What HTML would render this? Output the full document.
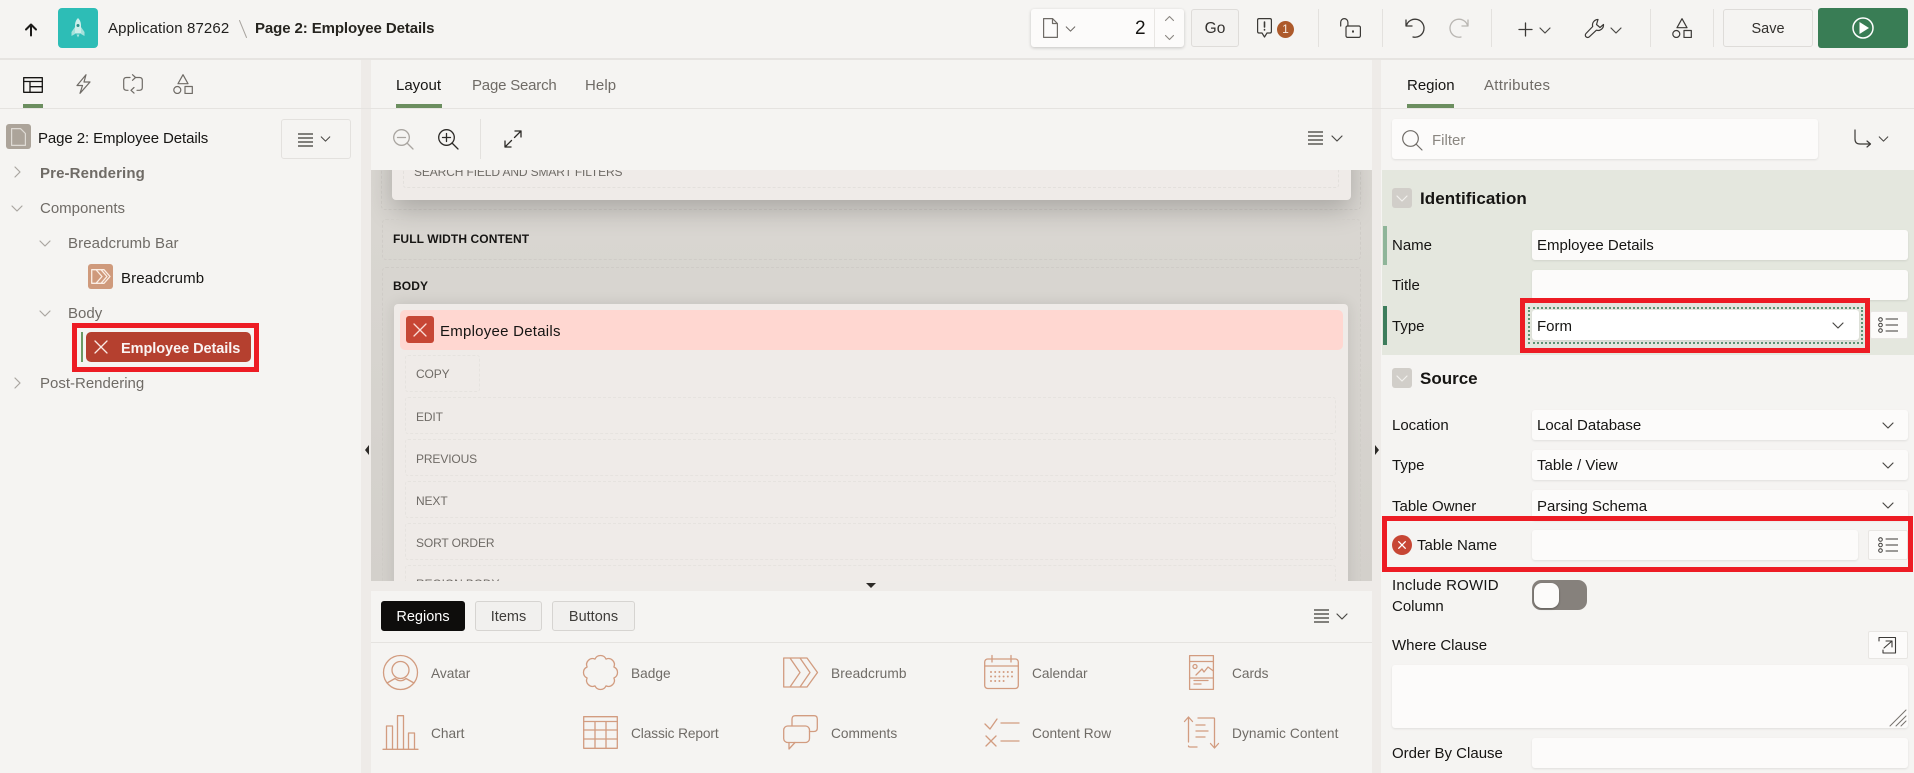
<!DOCTYPE html>
<html><head><meta charset="utf-8"><style>
html,body{margin:0;padding:0;width:1914px;height:773px;overflow:hidden;background:#f5f4f2}
body{position:relative;font-family:"Liberation Sans",sans-serif;font-size:15px;color:#161513}
.a{position:absolute;box-sizing:border-box}
.t{position:absolute;white-space:nowrap;line-height:20px;margin-top:1px}
svg{position:absolute;overflow:visible;fill:none;stroke-linecap:round;stroke-linejoin:round}
.g{color:#6f6b66}
.inp{position:absolute;box-sizing:border-box;background:#fcfbfa;border-radius:3px;height:30px;box-shadow:0 1px 2px rgba(0,0,0,.09)}
.side{position:absolute;box-sizing:border-box;background:#fcfbfa;border:1px solid #e8e6e3;border-radius:2px;width:40px}
.sep{position:absolute;width:1px;background:#e3e1de}
.red{position:absolute;box-sizing:border-box;border:5px solid #ed1c24;z-index:20}
.box{position:absolute;box-sizing:border-box;border:1px dashed #e6e3df;border-radius:3px;left:405px;width:931px;height:37px}
.cap{position:absolute;font-size:12px;line-height:14px;color:#6f6b66;white-space:nowrap;letter-spacing:-.12px}
.cb{font-weight:bold;color:#161513;letter-spacing:.1px}
.btn{position:absolute;box-sizing:border-box;border:1px solid #d6d4d1;border-radius:3px;background:#f1f0ee;text-align:center;top:601px;height:30px;line-height:30px;font-size:14.5px;color:#3f3d3a}
.lbl{position:absolute;font-size:13.7px;line-height:20px;color:#6f6b66;white-space:nowrap;margin-top:1px}
.ic{stroke:#d29c80;stroke-width:1.3}
.chev{stroke:#4a4845;stroke-width:1.2}
.gch{stroke:#a9a5a0;stroke-width:1.2}
</style></head><body>
<svg width="0" height="0" style="position:absolute">
<defs>
<symbol id="shapes" viewBox="0 0 20 20"><path d="M10 .7L15 9.7H5Z"/><circle cx="4.300" cy="16" r="3.500"/><rect x="12" y="12.500" width="7.300" height="7"/></symbol>
<symbol id="ham" viewBox="0 0 15 14"><path d="M0 1H15M0 5H15M0 9H15M0 13H15"/></symbol>
<symbol id="lst" viewBox="0 0 20 16"><circle cx="2.500" cy="2.500" r="1.800"/><circle cx="2.500" cy="8" r="1.800"/><circle cx="2.500" cy="13.500" r="1.800"/><path d="M8 2H20M8 8H20M8 14H20"/></symbol>
<symbol id="dn" viewBox="0 0 12 7"><path d="M1 1L6 6L11 1"/></symbol>
</defs></svg>

<!-- header -->
<div class="a" style="left:0;top:58px;width:1914px;height:2px;background:#e6e4e1"></div>
<svg style="left:25px;top:23px" width="12" height="13" stroke="#1c1b19" stroke-width="2"><path d="M6 12.500V1.500M1 6.500L6 1.500L11 6.500"/></svg>
<div class="a" style="left:58px;top:8px;width:40px;height:40px;background:#2dbdb6;border-radius:4px"></div>
<svg style="left:70px;top:18px" width="16" height="20" stroke="none"><path fill="#cdeeea" d="M8 0C10.500 2.500 11 5 11 8V15.500H5V8C5 5 5.500 2.500 8 0Z"/><path fill="#a5e2dc" d="M5 9L1.500 14V18L5 16ZM11 9L14.500 14V18L11 16ZM6.500 16.500H9.500L8 19.500Z"/><circle cx="8" cy="7.500" r="1.500" fill="#2a8f8a"/></svg>
<div class="t" style="left:108px;top:19px;margin-top:0;letter-spacing:.12px;color:#201f1d">Application 87262</div>
<svg style="left:239px;top:20px" width="8" height="18" stroke="#a9a5a0" stroke-width="1"><path d="M.5 .5L7.500 17.500"/></svg>
<div class="t" style="left:255px;top:19px;margin-top:0;font-weight:bold;letter-spacing:-.1px;color:#26241f">Page 2: Employee Details</div>

<div class="a" style="left:1031px;top:9px;width:153px;height:38px;background:#fcfbfa;border-radius:3px;box-shadow:0 1px 3px rgba(0,0,0,.2)"></div>
<svg style="left:1043px;top:18px" width="15" height="20" stroke="#6f6b66" stroke-width="1.2"><path d="M.6 .6H9.500L14.400 5.500V19.400H.6ZM9.500 .6V5.500H14.400"/></svg>
<svg style="left:1065px;top:26px" width="11" height="6" viewBox="0 0 12 7" stroke="#6f6b66" stroke-width="1.2"><use href="#dn"/></svg>
<div class="t" style="left:1135px;top:19px;margin-top:0;font-size:19px;color:#161513">2</div>
<div class="sep" style="left:1154px;top:9px;height:38px;background:#e8e6e3"></div>
<svg style="left:1165px;top:16px" width="9" height="5" stroke="#8a8680" stroke-width="1.1"><path d="M.5 4.500L4.500 .5L8.500 4.500"/></svg>
<svg style="left:1165px;top:35px" width="9" height="5" stroke="#8a8680" stroke-width="1.1"><path d="M.5 .5L4.500 4.500L8.500 .5"/></svg>
<div class="a" style="left:1191px;top:9px;width:48px;height:38px;background:#f3f2f0;border:1px solid #dedcd9;border-radius:3px;text-align:center;line-height:37px;font-size:15.500px;color:#33312e">Go</div>
<svg style="left:1257px;top:18px" width="15" height="20" stroke="#3c3a37" stroke-width="1.2"><path d="M2 .6H13Q14.400 .6 14.400 2V13.500Q14.400 15 13 15H10L7.500 19L5 15H2Q.6 15 .6 13.500V2Q.6 .6 2 .6Z"/><path stroke-width="1.6" d="M7.500 4V9M7.500 11.500V12"/></svg>
<div class="a" style="left:1277px;top:21px;width:17px;height:17px;border-radius:50%;background:#ad5a2b;color:#f7e9df;font-size:12px;line-height:17px;text-align:center">1</div>
<div class="sep" style="left:1318px;top:9px;height:38px"></div>
<svg style="left:1340px;top:18px" width="21" height="20" stroke="#3c3a37" stroke-width="1.2"><path d="M.7 8V4.200A3.600 3.600 0 0 1 7.900 4.200V8"/><rect x="6" y="8" width="14.400" height="11.400" rx="1.500"/><path stroke-width="2" d="M13 13.200V13.800"/></svg>
<div class="sep" style="left:1382px;top:9px;height:38px"></div>
<svg style="left:1405px;top:18px" width="20" height="20" stroke="#3c3a37" stroke-width="1.3"><path d="M1 2V8H7M1.400 7.600A9 9 0 1 1 8 19"/></svg>
<svg style="left:1449px;top:18px" width="20" height="20" stroke="#b9b6b2" stroke-width="1.3"><path d="M19 2V8H13M18.600 7.600A9 9 0 1 0 12 19"/></svg>
<div class="sep" style="left:1491px;top:9px;height:38px"></div>
<svg style="left:1519px;top:23px" width="13" height="13" stroke="#3c3a37" stroke-width="1.3"><path d="M6.500 0V13M0 6.500H13"/></svg>
<svg class="chev" style="left:1539px;top:27px" width="12" height="7" viewBox="0 0 12 7"><use href="#dn"/></svg>
<svg style="left:1585px;top:18px" width="20" height="20" stroke="#3c3a37" stroke-width="1.2"><path d="M13 1.500A5.500 5.500 0 0 0 7.700 8.500L1 15.500A2.300 2.300 0 0 0 4.300 18.800L11.400 12.200A5.500 5.500 0 0 0 18.500 6.500L15 9.500L11.500 6.500Z"/></svg>
<svg class="chev" style="left:1610px;top:27px" width="12" height="7" viewBox="0 0 12 7"><use href="#dn"/></svg>
<div class="sep" style="left:1650px;top:9px;height:38px"></div>
<svg style="left:1672px;top:18px" width="20" height="20" stroke="#3c3a37" stroke-width="1.2"><use href="#shapes"/></svg>
<div class="sep" style="left:1713px;top:9px;height:38px"></div>
<div class="a" style="left:1723px;top:9px;width:90px;height:38px;background:#f5f4f2;border:1px solid #dedcd9;border-radius:3px;text-align:center;line-height:38px;color:#33312e;font-size:14.500px">Save</div>
<div class="a" style="left:1818px;top:8px;width:90px;height:40px;background:#397d55;border-radius:3px"></div>
<svg style="left:1852px;top:17px" width="22" height="22" stroke="#fff" stroke-width="1.5"><circle cx="11" cy="11" r="10"/><path fill="#fff" stroke="none" d="M7.500 5L17 11L7.500 17Z"/></svg>

<!-- gutters -->
<div class="a" style="left:361px;top:60px;width:10px;height:713px;background:#eeebe8"></div>
<div class="a" style="left:1372px;top:60px;width:9px;height:713px;background:#eeebe8"></div>
<div class="a" style="left:0;top:108px;width:1914px;height:1px;background:#e5e3e0"></div>

<!-- left tabs -->
<div class="a" style="left:23px;top:104px;width:20px;height:4px;background:#6b8e5f"></div>
<svg style="left:23px;top:77px" width="20" height="16" stroke="#161513" stroke-width="1.3"><rect x=".7" y=".7" width="18.600" height="14.600"/><path d="M.7 4.500H19.300M7 4.500V15.300M7 9.700H19.300"/></svg>
<svg style="left:76px;top:74px" width="15" height="20" stroke="#6f6b66" stroke-width="1.2"><path d="M10 .7L1 11.500H6.500L4 19.300L14 8H8Z"/></svg>
<svg style="left:123px;top:74px" width="20" height="20" stroke="#6f6b66" stroke-width="1.2"><path d="M7 3.500H3.500Q.7 3.500 .7 6.300V13.500Q.7 16.300 3.500 16.300H5M14 16.300H16.500Q19.300 16.300 19.300 13.500V6.300Q19.300 3.500 16.500 3.500H13M9.500 .7L12.500 3.500L9.500 6.300M11 13.500L8 16.300L11 19.100"/></svg>
<svg style="left:173px;top:74px" width="20" height="20" stroke="#6f6b66" stroke-width="1.2"><use href="#shapes"/></svg>

<!-- tree -->
<div class="a" style="left:6px;top:124px;width:25px;height:25px;background:#aca49a;border-radius:3px"></div>
<svg style="left:11px;top:128px" width="15" height="18" stroke="#dfdbd5" stroke-width="1.2"><path d="M.6 .6H9.500L14.400 5.500V17.400H.6Z"/></svg>
<div class="t" style="left:38px;top:128px;letter-spacing:-.1px">Page 2: Employee Details</div>
<div class="a" style="left:281px;top:119px;width:70px;height:40px;border:1px solid #e3e1de;border-radius:3px;background:#f5f4f2"></div>
<svg style="left:298px;top:133px" width="15" height="14" stroke="#3c3a37" stroke-width="1.2"><use href="#ham"/></svg>
<svg class="chev" style="left:320px;top:136px" width="11" height="6" viewBox="0 0 12 7"><use href="#dn"/></svg>

<svg class="gch" style="left:14px;top:166px" width="7" height="12"><path d="M1 1L6 6L1 11"/></svg>
<div class="t" style="left:40px;top:163px;font-weight:bold;letter-spacing:.12px;color:#6f6b66">Pre-Rendering</div>
<svg class="gch" style="left:11px;top:205px" width="12" height="7" viewBox="0 0 12 7"><use href="#dn"/></svg>
<div class="t g" style="left:40px;top:198px">Components</div>
<svg class="gch" style="left:39px;top:240px" width="12" height="7" viewBox="0 0 12 7"><use href="#dn"/></svg>
<div class="t g" style="left:68px;top:233px;letter-spacing:.1px">Breadcrumb Bar</div>
<div class="a" style="left:88px;top:264px;width:25px;height:25px;background:#cf9a7c;border-radius:3px"></div>
<svg style="left:91px;top:269px" width="20" height="15" stroke="#fbeee5" stroke-width="1.3"><path d="M.7 .7H13L19 7.500L13 14.300H.7ZM5 .7L11 7.500L5 14.300M10 .7L16 7.500L10 14.300"/></svg>
<div class="t" style="left:121px;top:268px;letter-spacing:.15px">Breadcrumb</div>
<svg class="gch" style="left:39px;top:310px" width="12" height="7" viewBox="0 0 12 7"><use href="#dn"/></svg>
<div class="t g" style="left:68px;top:303px">Body</div>
<div class="a" style="left:81px;top:332px;width:2px;height:30px;background:#6b9a63"></div>
<div class="a" style="left:86px;top:332px;width:165px;height:30px;background:#b5402f;border-radius:5px"></div>
<svg style="left:94px;top:340px" width="14" height="14" stroke="#fbe9e4" stroke-width="1.3"><path d="M1 1L13 13M13 1L1 13"/></svg>
<div class="t" style="left:121px;top:338px;color:#fff;font-weight:bold;font-size:14.500px;letter-spacing:-.05px;opacity:.94">Employee Details</div>
<div class="red" style="left:72px;top:323px;width:187px;height:49px"></div>
<svg class="gch" style="left:14px;top:377px" width="7" height="12"><path d="M1 1L6 6L1 11"/></svg>
<div class="t g" style="left:40px;top:373px">Post-Rendering</div>

<!-- center tabs -->
<div class="t" style="left:396px;top:75px">Layout</div>
<div class="t g" style="left:472px;top:75px;letter-spacing:-.2px">Page Search</div>
<div class="t g" style="left:585px;top:75px;letter-spacing:.1px">Help</div>
<div class="a" style="left:396px;top:104px;width:46px;height:4px;background:#6b8e5f"></div>

<!-- canvas -->
<div class="a" style="left:371px;top:170px;width:1001px;height:411px;overflow:hidden;background:linear-gradient(180deg,#dad7d2,#d3d0cb)">
  <div class="a" style="left:10px;top:-60px;width:980px;height:100px;border:1px dashed #cfccc7;border-radius:4px"></div>
  <div class="a" style="left:21px;top:-40px;width:959px;height:70px;background:#efebe8;border-radius:4px;box-shadow:0 10px 26px rgba(0,0,0,.22)"></div>
  <div class="a" style="left:32px;top:-40px;width:936px;height:58px;border:1px dashed #e3e0dc;border-radius:3px"></div>
  <div class="cap" style="left:43px;top:-5px">SEARCH FIELD AND SMART FILTERS</div>
  <div class="a" style="left:11px;top:49px;width:979px;height:41px;border:1px dashed #cfccc7;border-radius:4px"></div>
  <div class="cap cb" style="left:22px;top:62px">FULL WIDTH CONTENT</div>
  <div class="a" style="left:11px;top:97px;width:979px;height:340px;border:1px dashed #cfccc7;border-radius:4px"></div>
  <div class="cap cb" style="left:22px;top:109px">BODY</div>
  <div class="a" style="left:23px;top:134px;width:954px;height:320px;background:#efebe8;border-radius:4px;box-shadow:0 0 14px rgba(0,0,0,.1)"></div>
</div>
<div class="a" style="left:371px;top:109px;width:1001px;height:61px;background:#f5f4f2"></div>
<svg style="left:393px;top:129px" width="21" height="21" stroke="#a9a5a0" stroke-width="1.3"><circle cx="8.500" cy="8.500" r="7.800"/><path d="M14 14L20 20M4.500 8.500H12.500"/></svg>
<svg style="left:438px;top:129px" width="21" height="21" stroke="#2c2a27" stroke-width="1.3"><circle cx="8.500" cy="8.500" r="7.800"/><path d="M14 14L20 20M4.500 8.500H12.500M8.500 4.500V12.500"/></svg>
<div class="sep" style="left:480px;top:119px;height:40px"></div>
<svg style="left:504px;top:130px" width="18" height="18" stroke="#2c2a27" stroke-width="1.3"><path d="M17 1L10.500 7.500M1 17L7.500 10.500M11 1H17V7M1 11V17H7"/></svg>
<svg style="left:1308px;top:131px" width="15" height="14" stroke="#3c3a37" stroke-width="1.2"><use href="#ham"/></svg>
<svg class="chev" style="left:1331px;top:135px" width="12" height="7" viewBox="0 0 12 7"><use href="#dn"/></svg>

<div class="a" style="left:400px;top:310px;width:943px;height:40px;background:#ffd7d1;border-radius:5px"></div>
<div class="a" style="left:406px;top:316px;width:28px;height:27px;background:#c74634;border-radius:3px"></div>
<svg style="left:413px;top:323px" width="14" height="14" stroke="#fbdcd5" stroke-width="1.3"><path d="M1 1L13 13M13 1L1 13"/></svg>
<div class="t" style="left:440px;top:321px;letter-spacing:.25px">Employee Details</div>
<div class="box" style="top:355px;width:75px"></div><div class="cap" style="left:416px;top:367px">COPY</div>
<div class="box" style="top:397px"></div><div class="cap" style="left:416px;top:410px">EDIT</div>
<div class="box" style="top:439px"></div><div class="cap" style="left:416px;top:452px">PREVIOUS</div>
<div class="box" style="top:481px"></div><div class="cap" style="left:416px;top:494px">NEXT</div>
<div class="box" style="top:523px"></div><div class="cap" style="left:416px;top:536px">SORT ORDER</div>
<div class="a" style="left:405px;top:565px;width:931px;height:16px;border:1px dashed #e6e3df;border-bottom:0;border-radius:3px 3px 0 0"></div>
<div class="a" style="left:416px;top:577px;width:90px;height:4px;overflow:hidden"><div class="cap" style="left:0;top:0">REGION BODY</div></div>

<!-- collapse triangles -->
<svg style="left:365px;top:445px" width="4" height="10" stroke="none"><path fill="#2c2a27" d="M4 0V10L0 5Z"/></svg>
<svg style="left:1375px;top:445px" width="4" height="10" stroke="none"><path fill="#2c2a27" d="M0 0V10L4 5Z"/></svg>
<div class="a" style="left:371px;top:581px;width:1001px;height:10px;background:#eeebe8"></div>
<svg style="left:866px;top:583px" width="10" height="5" stroke="none"><path fill="#2c2a27" d="M0 0H10L5 5Z"/></svg>

<!-- bottom -->
<div class="btn" style="left:381px;width:84px;background:#0e0d0c;border-color:#0e0d0c;color:#fff">Regions</div>
<div class="btn" style="left:475px;width:67px">Items</div>
<div class="btn" style="left:552px;width:83px">Buttons</div>
<svg style="left:1314px;top:609px" width="15" height="14" stroke="#3c3a37" stroke-width="1.2"><use href="#ham"/></svg>
<svg class="chev" style="left:1336px;top:613px" width="12" height="7" viewBox="0 0 12 7"><use href="#dn"/></svg>
<div class="a" style="left:371px;top:642px;width:1001px;height:1px;background:#e5e3e0"></div>

<svg class="ic" style="left:383px;top:655px" width="35" height="35"><circle cx="17.500" cy="17.500" r="17"/><circle cx="17.500" cy="15" r="8.500"/><path d="M4 28L12 23.500M31 28L23 23.500M12 23.500Q17.500 28 23 23.500"/></svg>
<div class="lbl" style="left:431px;top:663px">Avatar</div>
<svg class="ic" style="left:583px;top:655px" width="35" height="35"><path d="M23 4.100A6 6 0 0 1 30.900 12A6 6 0 0 1 30.900 23A6 6 0 0 1 23 30.900A6 6 0 0 1 12 30.900A6 6 0 0 1 4.100 23A6 6 0 0 1 4.100 12A6 6 0 0 1 12 4.100A6 6 0 0 1 23 4.100Z"/></svg>
<div class="lbl" style="left:631px;top:663px">Badge</div>
<svg class="ic" style="left:783px;top:655px" width="35" height="35"><path d="M.7 3H24L34.500 17.500L24 32H.7ZM7 3L17 17.500L7 32M17 3L27 17.500L17 32"/></svg>
<div class="lbl" style="left:831px;top:663px;letter-spacing:.1px">Breadcrumb</div>
<svg class="ic" style="left:984px;top:655px" width="35" height="35"><rect x=".7" y="4" width="33.600" height="29.500" rx="3"/><path d="M.7 11H34.300M8 .5V7M27 .5V7"/><path stroke-width="2" stroke-dasharray="0 4.200" d="M7 17H30M7 21.500H30M7 26H22"/></svg>
<div class="lbl" style="left:1032px;top:663px">Calendar</div>
<svg class="ic" style="left:1189px;top:655px" width="25" height="35"><rect x=".6" y=".6" width="23.800" height="33.800"/><path d="M.6 6.500H24.400M.6 23H24.400M5 25.500H19M5 29H12"/><circle cx="6" cy="11.500" r="2"/><path d="M7 20L13 14L15 17L19 12L24.400 16"/></svg>
<div class="lbl" style="left:1232px;top:663px">Cards</div>

<svg class="ic" style="left:383px;top:715px" width="35" height="35"><path d="M0 34.300H35M3.500 34V11H9.500V34M14.500 34V.7H20.500V34M25.500 34V18H31.500V34"/></svg>
<div class="lbl" style="left:431px;top:723px">Chart</div>
<svg class="ic" style="left:583px;top:716px" width="35" height="33"><rect x=".7" y=".7" width="33.600" height="31.600"/><path d="M.7 5.500H34.300M.7 14H34.300M.7 23H34.300M12 5.500V32.300M23 5.500V32.300"/></svg>
<div class="lbl" style="left:631px;top:723px;letter-spacing:-.1px">Classic Report</div>
<svg class="ic" style="left:783px;top:715px" width="35" height="35"><path d="M9 11V4Q9 .7 12.500 .7H31Q34.300 .7 34.300 4V13Q34.300 16.500 31 16.500H26.500"/><rect x=".7" y="11" width="25.800" height="16.500" rx="4"/><path d="M6 27.500V34L12 27.500"/></svg>
<div class="lbl" style="left:831px;top:723px">Comments</div>
<svg class="ic" style="left:984px;top:718px" width="35" height="30"><path d="M1 6L6 11L13 1M17 5H35M2 18L12 28M12 18L2 28M17 23H35"/></svg>
<div class="lbl" style="left:1032px;top:723px">Content Row</div>
<svg class="ic" style="left:1184px;top:716px" width="35" height="33"><path d="M4.500 30Q4.500 31 6 31H13M4.500 1V26M.5 5.500L4.500 1L8.500 5.500M14 2H30Q30.500 2 30.500 3V31M26.500 27.500L30.500 32L34.500 27.500M12 9H21M12 15H24M12 21H21"/></svg>
<div class="lbl" style="left:1232px;top:723px;letter-spacing:.1px">Dynamic Content</div>

<!-- right -->
<div class="t" style="left:1407px;top:75px">Region</div>
<div class="t g" style="left:1484px;top:75px;letter-spacing:.3px">Attributes</div>
<div class="a" style="left:1407px;top:104px;width:47px;height:4px;background:#6b8e5f"></div>
<div class="inp" style="left:1392px;top:119px;width:426px;height:40px"></div>
<svg style="left:1402px;top:130px" width="21" height="21" stroke="#6f6b66" stroke-width="1.2"><circle cx="8.500" cy="8.500" r="7.800"/><path d="M14 14L20 20"/></svg>
<div class="t" style="left:1432px;top:130px;font-size:15px;color:#8a8680">Filter</div>
<svg style="left:1854px;top:130px" width="18" height="20" stroke="#3c3a37" stroke-width="1.2"><path d="M1 0V9Q1 14 6 14H16M13 11L16.500 14L13 17"/></svg>
<svg class="chev" style="left:1878px;top:136px" width="11" height="6" viewBox="0 0 12 7"><use href="#dn"/></svg>

<div class="a" style="left:1382px;top:170px;width:532px;height:185px;background:#e4e7de"></div>
<div class="a" style="left:1392px;top:188px;width:20px;height:20px;background:#d1cec9;border-radius:3px"></div>
<svg style="left:1396px;top:195px" width="12" height="7" viewBox="0 0 12 7" stroke="#f2f0ed" stroke-width="1.2"><use href="#dn"/></svg>
<div class="t" style="left:1420px;top:188px;font-weight:bold;font-size:17px;letter-spacing:.08px">Identification</div>
<div class="a" style="left:1383px;top:226px;width:4px;height:39px;background:#8fb599"></div>
<div class="t" style="left:1392px;top:235px">Name</div>
<div class="inp" style="left:1532px;top:230px;width:376px"></div>
<div class="t" style="left:1537px;top:235px">Employee Details</div>
<div class="t" style="left:1392px;top:275px">Title</div>
<div class="inp" style="left:1532px;top:270px;width:376px"></div>
<div class="a" style="left:1383px;top:306px;width:4px;height:39px;background:#3d7d5c"></div>
<div class="t" style="left:1392px;top:316px">Type</div>
<div class="a" style="left:1528px;top:307px;width:335px;height:37px;border:2px dotted #5d9273"></div>
<div class="inp" style="left:1532px;top:310px;width:327px;background:#fff"></div>
<div class="t" style="left:1537px;top:316px">Form</div>
<svg class="chev" style="left:1832px;top:322px" width="12" height="7" viewBox="0 0 12 7"><use href="#dn"/></svg>
<div class="side" style="left:1870px;top:311px;height:28px;width:38px"></div>
<svg style="left:1878px;top:317px" width="20" height="16" stroke="#3c3a37" stroke-width="1"><use href="#lst"/></svg>
<div class="red" style="left:1520px;top:298px;width:350px;height:55px"></div>

<div class="a" style="left:1392px;top:368px;width:20px;height:20px;background:#d1cec9;border-radius:3px"></div>
<svg style="left:1396px;top:375px" width="12" height="7" viewBox="0 0 12 7" stroke="#f2f0ed" stroke-width="1.2"><use href="#dn"/></svg>
<div class="t" style="left:1420px;top:368px;font-weight:bold;font-size:17px">Source</div>

<div class="t" style="left:1392px;top:415px">Location</div>
<div class="inp" style="left:1532px;top:410px;width:376px"></div>
<div class="t" style="left:1537px;top:415px">Local Database</div>
<svg class="chev" style="left:1882px;top:422px" width="12" height="7" viewBox="0 0 12 7"><use href="#dn"/></svg>
<div class="t" style="left:1392px;top:455px">Type</div>
<div class="inp" style="left:1532px;top:450px;width:376px"></div>
<div class="t" style="left:1537px;top:455px">Table / View</div>
<svg class="chev" style="left:1882px;top:462px" width="12" height="7" viewBox="0 0 12 7"><use href="#dn"/></svg>
<div class="t" style="left:1392px;top:496px">Table Owner</div>
<div class="inp" style="left:1532px;top:490px;width:376px"></div>
<div class="t" style="left:1537px;top:496px">Parsing Schema</div>
<svg class="chev" style="left:1882px;top:502px" width="12" height="7" viewBox="0 0 12 7"><use href="#dn"/></svg>

<div class="a" style="left:1392px;top:535px;width:20px;height:20px;border-radius:50%;background:#c74634"></div>
<svg style="left:1398px;top:541px" width="8" height="8" stroke="#fff" stroke-width="1.300"><path d="M.7 .7L7.300 7.300M7.300 .7L.7 7.300"/></svg>
<div class="t" style="left:1417px;top:535px">Table Name</div>
<div class="inp" style="left:1532px;top:530px;width:326px"></div>
<div class="side" style="left:1868px;top:530px;height:30px"></div>
<svg style="left:1878px;top:537px" width="20" height="16" stroke="#3c3a37" stroke-width="1"><use href="#lst"/></svg>
<div class="red" style="left:1382px;top:516px;width:531px;height:56px"></div>

<div class="t" style="left:1392px;top:575px;letter-spacing:.2px">Include ROWID</div>
<div class="t" style="left:1392px;top:596px">Column</div>
<div class="a" style="left:1532px;top:580px;width:55px;height:30px;border-radius:9px;background:#86817c"></div>
<div class="a" style="left:1534px;top:583px;width:25px;height:25px;border-radius:8px;background:#fcfbfa;box-shadow:0 1px 2px rgba(0,0,0,.3)"></div>
<div class="t" style="left:1392px;top:635px">Where Clause</div>
<div class="side" style="left:1868px;top:631px;height:28px"></div>
<svg style="left:1878px;top:636px" width="19" height="18" stroke="#3c3a37" stroke-width="1.100"><path d="M1 5V1.500H17.500V17H5V14M6 12L14 5M8 5H14V11"/></svg>
<div class="inp" style="left:1392px;top:665px;width:516px;height:63px"></div>
<svg style="left:1889px;top:709px" width="18" height="18" stroke="#77736e" stroke-width="1"><path d="M1 17L17 1M7 17L17 7M12 17L17 12"/></svg>
<div class="t" style="left:1392px;top:743px">Order By Clause</div>
<div class="inp" style="left:1532px;top:738px;width:376px"></div>
</body></html>
